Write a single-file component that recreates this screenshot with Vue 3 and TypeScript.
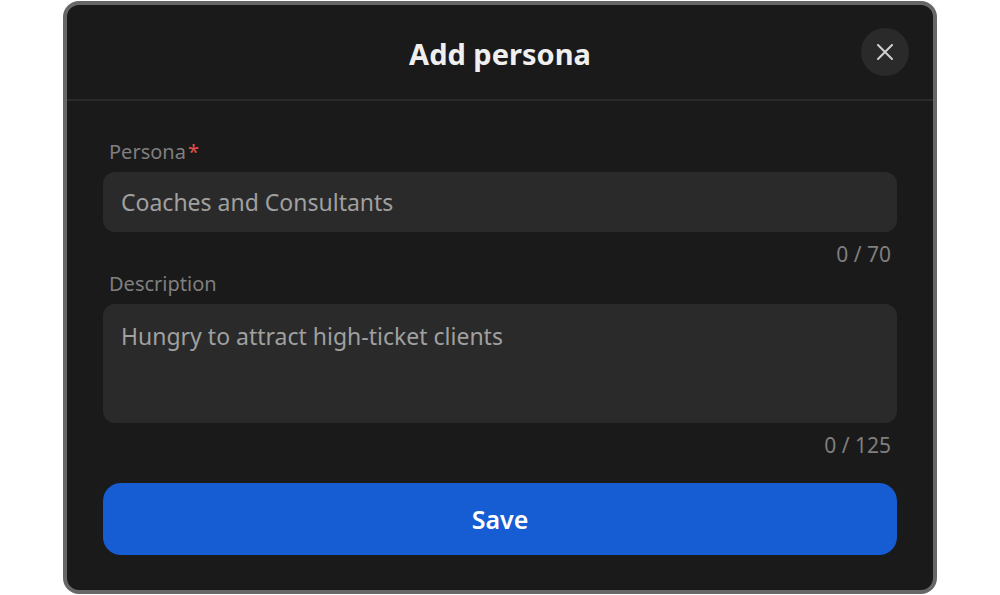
<script setup lang="ts">
import { computed, ref } from 'vue'

const PERSONA_LIMIT = 70
const DESCRIPTION_LIMIT = 125

const open = ref(true)
const persona = ref('')
const description = ref('')

const personaCount = computed(() => `${persona.value.length} / ${PERSONA_LIMIT}`)
const descriptionCount = computed(() => `${description.value.length} / ${DESCRIPTION_LIMIT}`)
</script>

<template>
  <main class="page">
    <section v-if="open" class="dialog" role="dialog" aria-labelledby="dialog-title">
      <header class="header">
        <h1 id="dialog-title" class="title">Add persona</h1>
        <button class="close" type="button" aria-label="Close" @click="open = false">
          <svg viewBox="0 0 16 16" width="16" height="16" aria-hidden="true">
            <path d="M1 1 15 15M15 1 1 15" />
          </svg>
        </button>
      </header>
      <form class="form" @submit.prevent>
        <label class="label" for="persona">Persona<span class="required">*</span></label>
        <input
          id="persona"
          v-model="persona"
          class="field"
          type="text"
          :maxlength="PERSONA_LIMIT"
          placeholder="Coaches and Consultants"
        />
        <p class="count">{{ personaCount }}</p>
        <label class="label" for="description">Description</label>
        <textarea
          id="description"
          v-model="description"
          class="field area"
          :maxlength="DESCRIPTION_LIMIT"
          placeholder="Hungry to attract high-ticket clients"
        ></textarea>
        <p class="count">{{ descriptionCount }}</p>
        <button class="save" type="submit">Save</button>
      </form>
    </section>
  </main>
</template>

<style>
body {
  background: #ffffff;
}
</style>

<style scoped>
.page {
  padding: 1px 63px 0;
  font-family: "Segoe UI", "Noto Sans", "Open Sans", sans-serif;
}
.page * {
  box-sizing: border-box;
}
.dialog {
  border: 4px solid #666766;
  border-radius: 16px;
  background: #1a1a1a;
}
.header {
  display: grid;
  grid-template-columns: 48px 1fr 48px;
  align-items: center;
  padding: 23px 24px;
  border-bottom: 2px solid #2b2b2b;
}
.title {
  grid-column: 2;
  margin: 0;
  padding-top: 4px;
  color: #efefef;
  font-size: 29px;
  font-weight: 700;
  line-height: 44px;
  text-align: center;
}
.close {
  display: flex;
  align-items: center;
  justify-content: center;
  width: 48px;
  height: 48px;
  padding: 0;
  border: 0;
  border-radius: 50%;
  background: #2a2a2a;
  cursor: pointer;
}
.close path {
  fill: none;
  stroke: #cfcfcf;
  stroke-width: 2;
  stroke-linecap: round;
}
.form {
  display: flex;
  flex-direction: column;
  padding: 35px 36px;
}
.label {
  margin-bottom: 4px;
  padding-left: 6px;
  color: #7f7f7f;
  font-size: 20px;
  line-height: 32px;
}
.required {
  margin-left: 2px;
  color: #e5534b;
}
.field {
  display: block;
  width: 100%;
  height: 60px;
  margin: 0;
  padding: 0 18px;
  border: 0;
  border-radius: 12px;
  outline: 0;
  background: #2a2a2a;
  color: #efefef;
  font-family: inherit;
  font-size: 23px;
  line-height: 32px;
}
.field::placeholder {
  color: #a0a0a0;
  opacity: 1;
}
.area {
  height: 119px;
  padding: 16px 18px;
  resize: none;
}
.count {
  margin: 8px 6px 0;
  color: #7f7f7f;
  font-size: 21px;
  line-height: 28px;
  text-align: right;
}
.save {
  height: 72px;
  margin-top: 24px;
  padding: 0;
  border: 0;
  border-radius: 18px;
  background: #165dd4;
  color: #ffffff;
  font-family: inherit;
  font-size: 25px;
  font-weight: 600;
  cursor: pointer;
}
</style>
